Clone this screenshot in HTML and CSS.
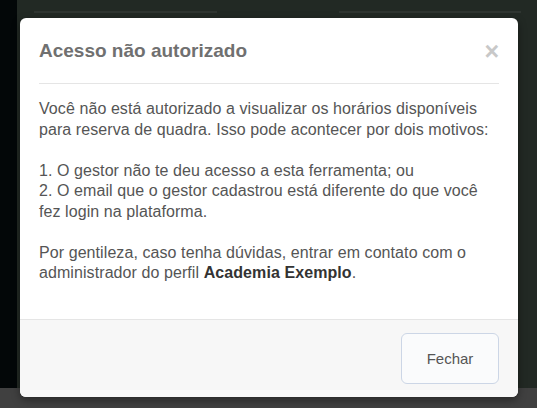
FILE: index.html
```html
<!doctype html>
<html lang="pt-BR">
  <head>
    <meta charset="UTF-8" />
    <meta name="viewport" content="width=device-width, initial-scale=1.0" />
    <title>Acesso não autorizado</title>
    <link rel="stylesheet" href="styles.css">
  </head>
  <body>
    <div class="page">
      <div class="page-main">
        <div class="side-strip"></div>
        <div class="page-content">
          <div class="grid-line left"></div>
          <div class="grid-line right"></div>
        </div>
      </div>
      <div class="bottom-bar"></div>
    </div>

    <div class="modal">
      <div class="modal-header">
        <h4 class="modal-title">Acesso não autorizado</h4>
        <button class="close" type="button">&times;</button>
      </div>
      <div class="modal-body">
        <p>Você não está autorizado a visualizar os horários disponíveis para reserva de quadra. Isso pode acontecer por dois motivos:</p>
        <p>1. O gestor não te deu acesso a esta ferramenta; ou<br>2. O email que o gestor cadastrou está diferente do que você fez login na plataforma.</p>
        <p>Por gentileza, caso tenha dúvidas, entrar em contato com o administrador do perfil <strong>Academia Exemplo</strong>.</p>
      </div>
      <div class="modal-footer">
        <button class="btn" type="button">Fechar</button>
      </div>
    </div>
  </body>
</html>
```

FILE: styles.css
```css
html,
body {
  margin: 0;
  height: 100%;
}
body {
  font-family: "Liberation Sans", Arial, sans-serif;
  background-color: #222924;
  overflow: hidden;
}
.page {
  display: flex;
  flex-direction: column;
  height: 100%;
}
.page-main {
  flex: 1;
  display: flex;
}
.side-strip {
  width: 17px;
  background-color: #030708;
}
.page-content {
  flex: 1;
  display: flex;
  justify-content: space-between;
  padding: 11px 16px 0 17px;
}
.grid-line {
  height: 8px;
  border-top: 2px solid #2f3531;
}
.grid-line.left {
  width: 183px;
}
.grid-line.right {
  width: 182px;
}
.bottom-bar {
  height: 20px;
  background-color: #404040;
}

.modal {
  position: absolute;
  top: 18px;
  left: 20px;
  width: 498px;
  background-color: #fff;
  border-radius: 6px;
  box-shadow: 0 3px 9px rgba(0, 0, 0, 0.4);
  overflow: hidden;
}
.modal-header {
  display: flex;
  justify-content: space-between;
  align-items: center;
  margin: 0 19px;
  padding: 22px 0 21px;
  border-bottom: 1px solid #e5e5e5;
}
.modal-title {
  margin: 0;
  font-size: 19px;
  line-height: 22px;
  font-weight: bold;
  color: #707070;
}
.close {
  padding: 0;
  border: none;
  background: none;
  font-family: "Liberation Sans", Arial, sans-serif;
  font-size: 25px;
  line-height: 20px;
  font-weight: bold;
  color: #c8c8c8;
  cursor: pointer;
}
.modal-body {
  padding: 15px 24px 15px 19px;
  font-size: 16px;
  line-height: 20.5px;
  letter-spacing: 0.08px;
  color: #555;
}
.modal-body p {
  margin: 0 0 20.5px;
}
.modal-body strong {
  color: #333;
}
.modal-footer {
  display: flex;
  justify-content: flex-end;
  padding: 13px 19px;
  background-color: #f7f7f7;
  border-top: 1px solid #e5e5e5;
}
.btn {
  width: 98px;
  height: 51px;
  border: 1px solid #ccd6e6;
  border-radius: 6px;
  background-color: #fafbfc;
  font-family: "Liberation Sans", Arial, sans-serif;
  font-size: 15px;
  color: #555;
  cursor: pointer;
}
```
